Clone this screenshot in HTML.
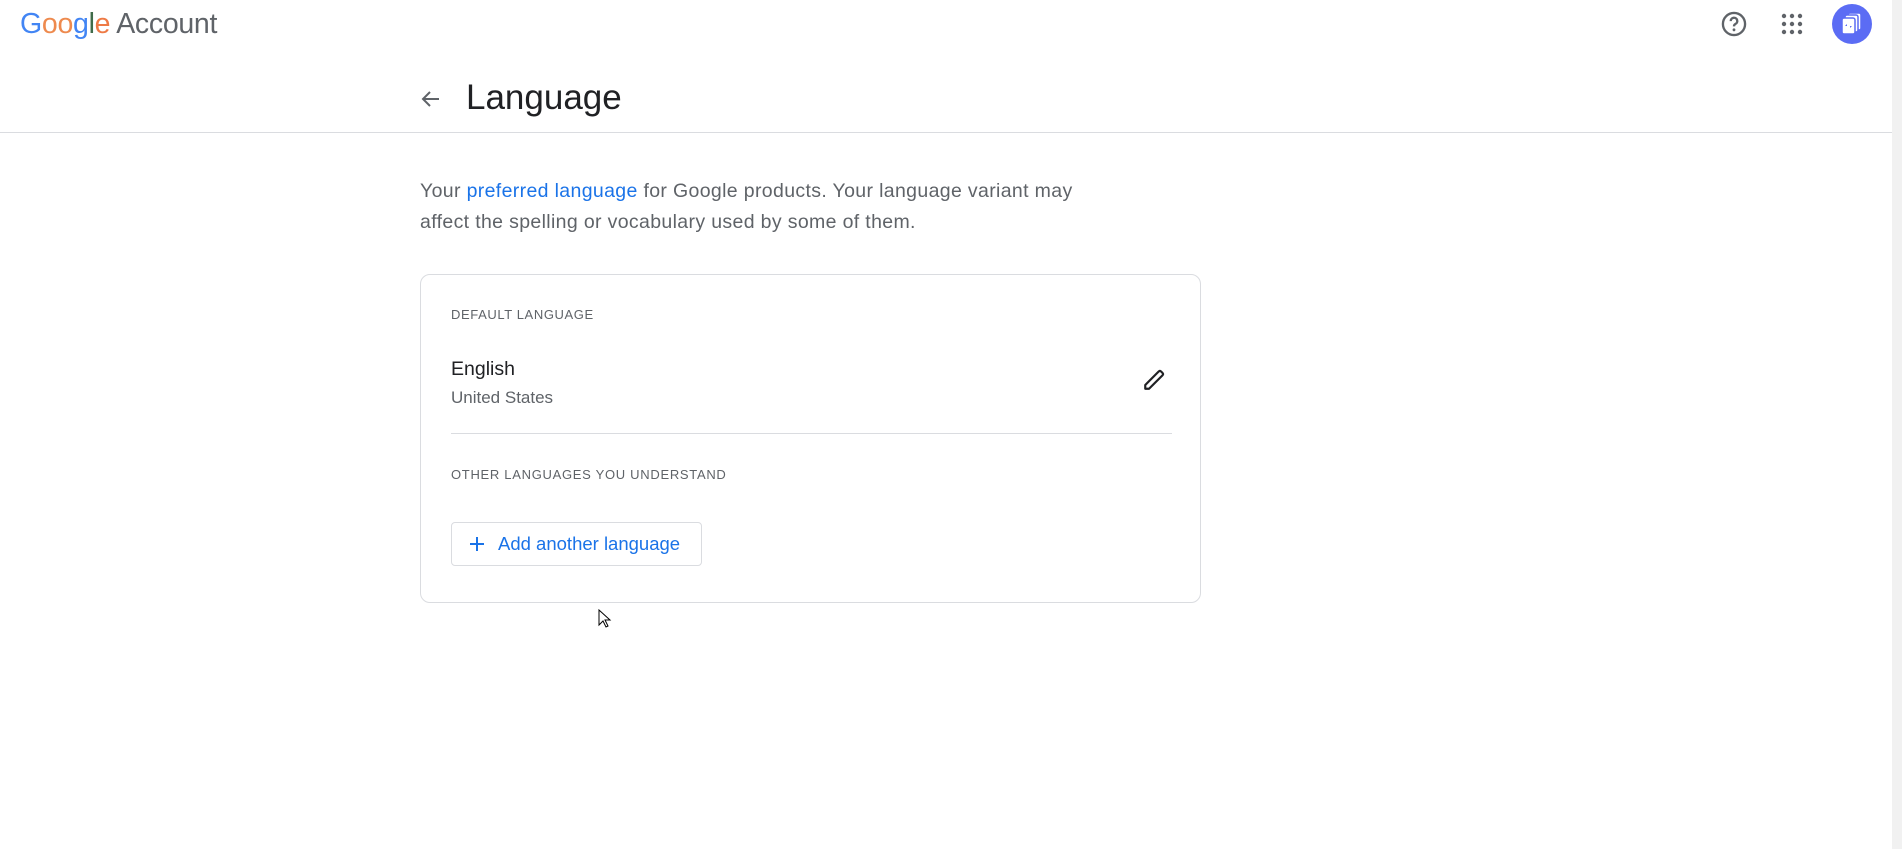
<!DOCTYPE html>
<html><head><meta charset="utf-8"><style>
*{margin:0;padding:0;box-sizing:border-box}
body{width:1902px;height:849px;background:#fff;font-family:"Liberation Sans",sans-serif;position:relative;overflow:hidden;color:#3c4043}
.a{position:absolute;white-space:nowrap}
</style></head><body>
<div class="a" style="right:0;top:0;width:10px;height:849px;background:#f1f1f1"></div>
<div class="a" style="left:20px;top:8px;font-size:28.5px;letter-spacing:-0.3px"><span style="color:#4285f4">G</span><span style="color:#ee8a4e">o</span><span style="color:#ee8a4e">o</span><span style="color:#4285f4">g</span><span style="color:#3f6b4a">l</span><span style="color:#ee7a45">e</span> <span style="color:#5f6368">Account</span></div>
<svg class="a" style="left:1720px;top:10px" width="28" height="28" viewBox="0 0 24 24"><circle cx="12" cy="12" r="9.5" fill="none" stroke="#5f6368" stroke-width="2"/><path d="M9.2 9.5a2.8 2.8 0 1 1 4 2.5c-.9.5-1.2 1-1.2 2" fill="none" stroke="#5f6368" stroke-width="2"/><circle cx="12" cy="17" r="1.2" fill="#5f6368"/></svg>
<svg class="a" style="left:1780px;top:12px" width="24" height="24" viewBox="0 0 24 24" fill="#5f6368"><circle cx="4" cy="4" r="2.2"/><circle cx="12" cy="4" r="2.2"/><circle cx="20" cy="4" r="2.2"/><circle cx="4" cy="12" r="2.2"/><circle cx="12" cy="12" r="2.2"/><circle cx="20" cy="12" r="2.2"/><circle cx="4" cy="20" r="2.2"/><circle cx="12" cy="20" r="2.2"/><circle cx="20" cy="20" r="2.2"/></svg>
<svg class="a" style="left:1832px;top:4px" width="40" height="40" viewBox="0 0 40 40"><circle cx="20" cy="20" r="20" fill="#5b6cf4"/><rect x="16" y="9" width="13" height="17" rx="2" fill="#fff" stroke="#5b6cf4" stroke-width="1.5"/><rect x="13" y="11" width="13" height="17" rx="2" fill="#fff" stroke="#5b6cf4" stroke-width="1.5"/><rect x="10" y="14" width="13" height="16" rx="2" fill="#fff" stroke="#5b6cf4" stroke-width="1.5"/><path d="M15 22l-2 0 2-2zM18 22l2 0-2 2z" fill="#5b6cf4"/></svg>
<svg class="a" style="left:419px;top:87px" width="24" height="24" viewBox="0 0 24 24"><path d="M20 12H5M11 5l-7 7 7 7" fill="none" stroke="#5f6368" stroke-width="2"/></svg>
<div class="a" style="left:466px;top:78px;font-size:35px;color:#202124">Language</div>
<div class="a" style="left:0;top:132px;width:1892px;height:1px;background:#dadce0"></div>
<div class="a" style="left:420px;top:176px;font-size:19.5px;letter-spacing:0.35px;line-height:31px;color:#5f6368">Your <span style="color:#1a73e8">preferred language</span> for Google products. Your language variant may<br>affect the spelling or vocabulary used by some of them.</div>
<div class="a" style="left:420px;top:274px;width:781px;height:329px;border:1px solid #dadce0;border-radius:10px"></div>
<div class="a" style="left:451px;top:307px;font-size:13px;letter-spacing:0.6px;color:#5f6368">DEFAULT LANGUAGE</div>
<div class="a" style="left:451px;top:358px;font-size:19.5px;color:#202124">English</div>
<div class="a" style="left:451px;top:388px;font-size:17px;color:#5f6368">United States</div>
<svg class="a" style="left:1142px;top:366px" width="26" height="26" viewBox="0 0 24 24"><path d="M3 21v-3.5L15.5 5a1.5 1.5 0 0 1 2 0l1.5 1.5a1.5 1.5 0 0 1 0 2L6.5 21z" fill="none" stroke="#202124" stroke-width="2" stroke-linejoin="round"/></svg>
<div class="a" style="left:451px;top:433px;width:721px;height:1px;background:#dadce0"></div>
<div class="a" style="left:451px;top:467px;font-size:13px;letter-spacing:0.7px;color:#5f6368">OTHER LANGUAGES YOU UNDERSTAND</div>
<div class="a" style="left:451px;top:522px;width:251px;height:44px;border:1px solid #dadce0;border-radius:4px"></div>
<svg class="a" style="left:468px;top:535px" width="18" height="18" viewBox="0 0 18 18"><path d="M9 2v14M2 9h14" stroke="#1a73e8" stroke-width="2"/></svg>
<div class="a" style="left:498px;top:533px;font-size:18.5px;color:#1a73e8">Add another language</div>
<svg class="a" style="left:598px;top:609px" width="14" height="20" viewBox="0 0 14 20"><path d="M1 1v15l4-4 3 6 2-1-3-6h5z" fill="#fff" stroke="#000" stroke-width="1"/></svg>
</body></html>
